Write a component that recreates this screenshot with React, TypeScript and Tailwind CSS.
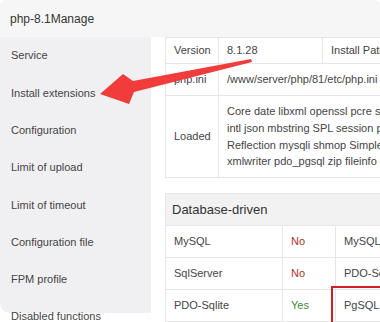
import React from "react";

const menu = [
  "Service",
  "Install extensions",
  "Configuration",
  "Limit of upload",
  "Limit of timeout",
  "Configuration file",
  "FPM profile",
  "Disabled functions",
];

const loaded = [
  "Core date libxml openssl pcre sqlite3 zlib ctype curl dom",
  "intl json mbstring SPL session pcntl standard mysqlnd",
  "Reflection mysqli shmop SimpleXML sockets sodium",
  "xmlwriter pdo_pgsql zip fileinfo exif gettext",
];

const drivers = [
  { name: "MySQL", ok: false, next: "MySQLi" },
  { name: "SqlServer", ok: false, next: "PDO-SqlServer" },
  { name: "PDO-Sqlite", ok: true, next: "PgSQL" },
  { name: "PDO-PgSQL", ok: true, next: "Sqlite3" },
];

const cell = "border border-[#e6e6e6] px-2 align-middle";

const App = () => {
  return (
    <div className="relative w-[380px] h-[322px] overflow-hidden bg-white font-['Liberation_Sans',Arial,sans-serif] text-[11px] text-[#444]">
      {/* Title bar */}
      <div className="h-[37px] bg-[#f6f6f6] rounded-t-[6px] pl-[10px] flex items-center text-[12px] text-[#333]">
        php-8.1Manage
      </div>

      <div className="flex">
        {/* Sidebar */}
        <div className="w-[151px] h-[276px] shrink-0 bg-[#f0f0f2] rounded-bl-[10px] pl-[11px]">
          {menu.map((item) => (
            <div key={item} className="h-[37.3px] flex items-center text-[#444] whitespace-nowrap">
              {item}
            </div>
          ))}
        </div>

        {/* Content */}
        <div className="flex-1 pl-[14px] min-w-0">
          <table className="w-[420px] border-collapse table-fixed">
            <colgroup>
              <col className="w-[53px]" />
              <col className="w-[104px]" />
              <col />
            </colgroup>
            <tbody>
              <tr className="h-[26px]">
                <td className={cell}>Version</td>
                <td className={cell}>8.1.28</td>
                <td className={`${cell} whitespace-nowrap overflow-hidden`}>Install Path</td>
              </tr>
              <tr className="h-[32px]">
                <td className={cell}>php.ini</td>
                <td className={`${cell} whitespace-nowrap overflow-hidden`} colSpan={2}>
                  /www/server/php/81/etc/php.ini
                </td>
              </tr>
              <tr className="h-[82px]">
                <td className={cell}>Loaded</td>
                <td className={`${cell} overflow-hidden`} colSpan={2}>
                  {loaded.map((l) => (
                    <div key={l} className="whitespace-nowrap leading-[16.7px]">
                      {l}
                    </div>
                  ))}
                </td>
              </tr>
            </tbody>
          </table>

          <table className="mt-[15px] w-[420px] border-collapse table-fixed">
            <colgroup>
              <col className="w-[117px]" />
              <col className="w-[53px]" />
              <col />
            </colgroup>
            <tbody>
              <tr className="h-[32px] bg-[#f2f2f2]">
                <td className={`${cell} text-[13px] px-[6px] text-[#333]`} colSpan={3}>
                  Database-driven
                </td>
              </tr>
              {drivers.map((d) => (
                <tr key={d.name} className="h-[32px]">
                  <td className={cell}>{d.name}</td>
                  <td className={`${cell} ${d.ok ? "text-[#3c8a3c]" : "text-[#b8322c]"}`}>
                    {d.ok ? "Yes" : "No"}
                  </td>
                  <td className={`${cell} whitespace-nowrap overflow-hidden`}>{d.next}</td>
                </tr>
              ))}
            </tbody>
          </table>
        </div>
      </div>

      {/* Annotation: highlight box */}
      <div className="absolute left-[331px] top-[286px] w-[90px] h-[60px] border-2 border-[#d01f25]" />

      {/* Annotation: arrow */}
      <svg className="absolute left-0 top-0 pointer-events-none" width="380" height="322">
        <polygon
          points="251,59 133,81 123,74 100,94 129,104 134,92 252,62"
          fill="#f23c3c"
        />
      </svg>
    </div>
  );
};

export default App;
